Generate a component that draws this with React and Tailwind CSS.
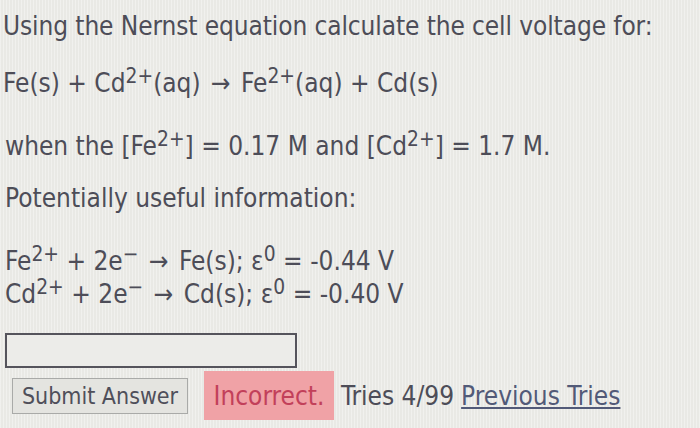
const sup = 'relative -top-[0.45em] text-[0.8em] leading-none'

function Sup({ children }) {
  return <span className={sup}>{children}</span>
}

function Arrow() {
  return <span className="mx-[3px]">→</span>
}

export default function App() {
  return (
    <div
      className="flex h-[428px] w-[700px] flex-col overflow-hidden bg-[#e9e9e5] bg-[repeating-linear-gradient(90deg,rgba(255,255,255,0.35)_0px,rgba(255,255,255,0.35)_1px,transparent_1px,transparent_3px)] pl-[3px] pt-[10px] text-[26px] leading-[32px] text-[#4d4d58]"
      style={{ fontFamily: '"DejaVu Sans Condensed", "DejaVu Sans", sans-serif' }}
    >
      <p className="tracking-[-0.1px]">Using the Nernst equation calculate the cell voltage for:</p>
      <p className="pt-[25px]">
        Fe(s) + Cd<Sup>2+</Sup>(aq) <Arrow /> Fe<Sup>2+</Sup>(aq) + Cd(s)
      </p>
      <p className="pl-[2px] pt-[31px]">
        when the [Fe<Sup>2+</Sup>] = 0.17 M and [Cd<Sup>2+</Sup>] = 1.7 M.
      </p>
      <p className="pl-[2px] pt-[20px]">Potentially useful information:</p>
      <div className="flex flex-col gap-[1px] pl-[2px] pt-[31px]">
        <p>
          Fe<Sup>2+</Sup> + 2e<Sup>−</Sup> <Arrow /> Fe(s); ε<Sup>0</Sup> = -0.44 V
        </p>
        <p>
          Cd<Sup>2+</Sup> + 2e<Sup>−</Sup> <Arrow /> Cd(s); ε<Sup>0</Sup> = -0.40 V
        </p>
      </div>
      <div className="ml-[2px] mt-[23px] h-[35px] w-[292px] shrink-0 border-2 border-[#55545c] bg-[#ecece9]" />
      <div className="mt-[3px] flex items-center gap-[7px]">
        <button className="ml-[9px] mr-[9px] h-[36px] w-[176px] border border-[#a9aaa8] bg-[#e4e4e0] text-[23px] text-[#4f4f5a]">
          Submit Answer
        </button>
        <span className="flex h-[49px] w-[130px] items-center justify-center bg-[#f0a2a6] text-[#c2405a]">
          Incorrect.
        </span>
        <span>Tries 4/99</span>
        <span className="text-[#525a78] underline">Previous Tries</span>
      </div>
    </div>
  )
}
